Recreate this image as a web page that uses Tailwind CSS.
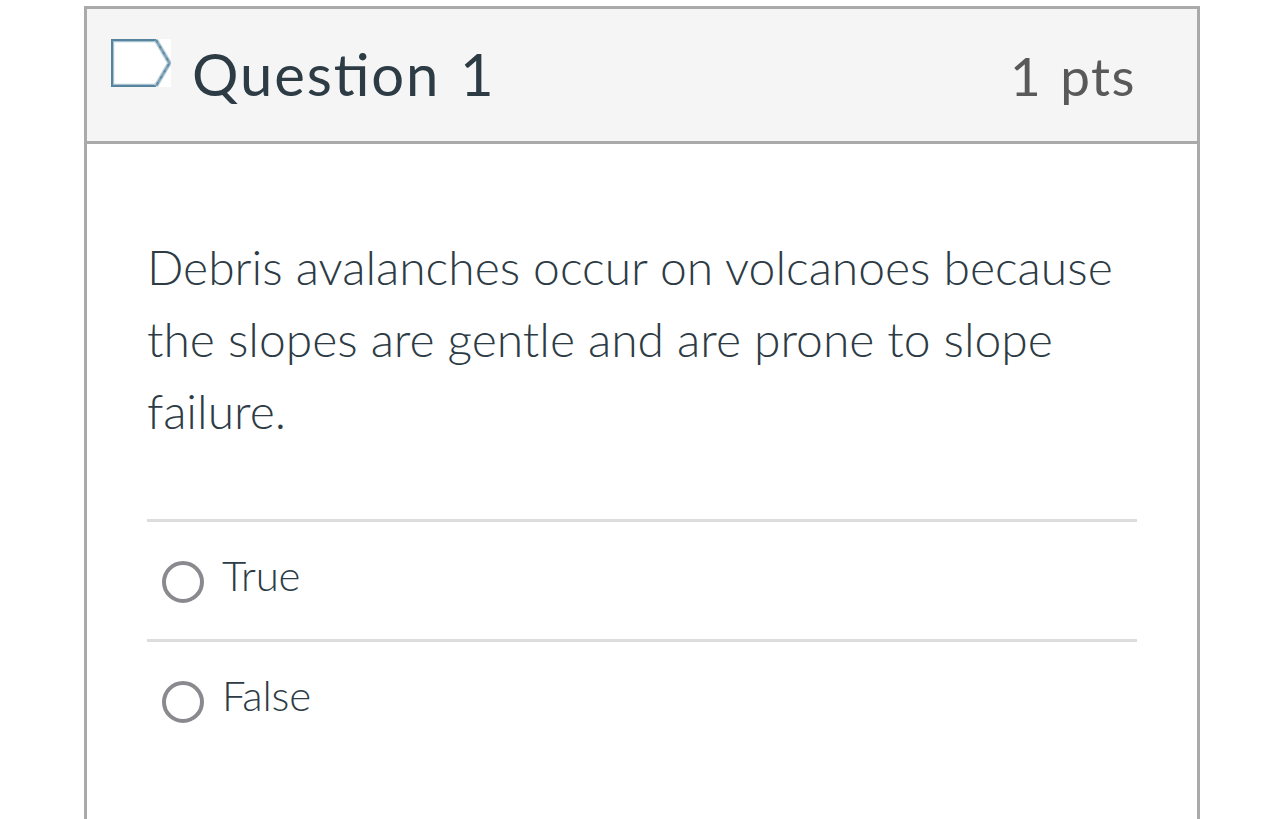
<!DOCTYPE html>
<html lang="en">
<head>
    <meta charset="UTF-8">
    <meta name="viewport" content="width=device-width, initial-scale=1.0">
    <title>Question 1</title>
    <script src="https://cdn.jsdelivr.net/npm/@tailwindcss/browser@4"></script>
</head>
<body class="bg-white font-['Lato',sans-serif] text-[#2d3b45]">
    <main class="mt-[6px] ml-[84px] w-[1116px] h-[813px] border-3 border-b-0 border-[#aaaaaa]">
        <!-- Question header -->
        <header class="flex items-start h-[135px] bg-[#f5f5f5] border-b-3 border-[#aaaaaa] pl-6 pr-[61px]">
            <svg class="mt-[30px] w-[60px] h-12 shrink-0" viewBox="0 0 60 48" fill="none">
                <rect width="60" height="48" fill="#fff"/>
                <path d="M45 2.5H2.5V45.5H45" stroke="#a9c2d0" stroke-width="1.4"/>
                <path d="M45 1H1V47H45" stroke="#55849f" stroke-width="2"/>
                <path d="M45 1L58.5 24L45 47" stroke="#c3d4dd" stroke-width="4.5"/>
                <path d="M45 1L58.5 24L45 47" stroke="#7da1b6" stroke-width="2.4"/>
                <path d="M45 1L58.5 24L45 47" stroke="#5f8ca6" stroke-width="2" stroke-dasharray="2.5 4.5"/>
            </svg>
            <h1 class="ml-[21px] mt-[29px] text-[58px] leading-[72px] tracking-[1.9px] [word-spacing:3px] [font-feature-settings:'liga'_1,'dlig'_1] whitespace-nowrap">Question 1</h1>
            <span class="ml-auto mt-[31px] text-[53px] leading-[72px] tracking-[1.5px] [word-spacing:3px] text-[#595959] whitespace-nowrap">1 pts</span>
        </header>

        <div class="px-[60px] pt-[87px]">
            <p class="text-[48px] leading-[72px] font-light whitespace-nowrap">Debris avalanches occur on volcanoes because<br>the slopes are gentle and are prone to slope<br>failure.</p>

            <!-- Answers -->
            <div class="mt-[72px] text-[42px] font-light">
                <label class="flex h-[120px] border-t-3 border-[#dddddd] pl-[15px]">
                    <span class="mt-[39px] size-[42px] rounded-full border-4 border-[#8a898e]"></span>
                    <span class="ml-[18px] mt-[22px] leading-[63px] tracking-[-0.2px]">True</span>
                </label>
                <label class="flex h-[120px] border-t-3 border-[#dddddd] pl-[15px]">
                    <span class="mt-[39px] size-[42px] rounded-full border-4 border-[#8a898e]"></span>
                    <span class="ml-[18px] mt-[22px] leading-[63px] tracking-[-0.2px]">False</span>
                </label>
            </div>
        </div>
    </main>
</body>
</html>
